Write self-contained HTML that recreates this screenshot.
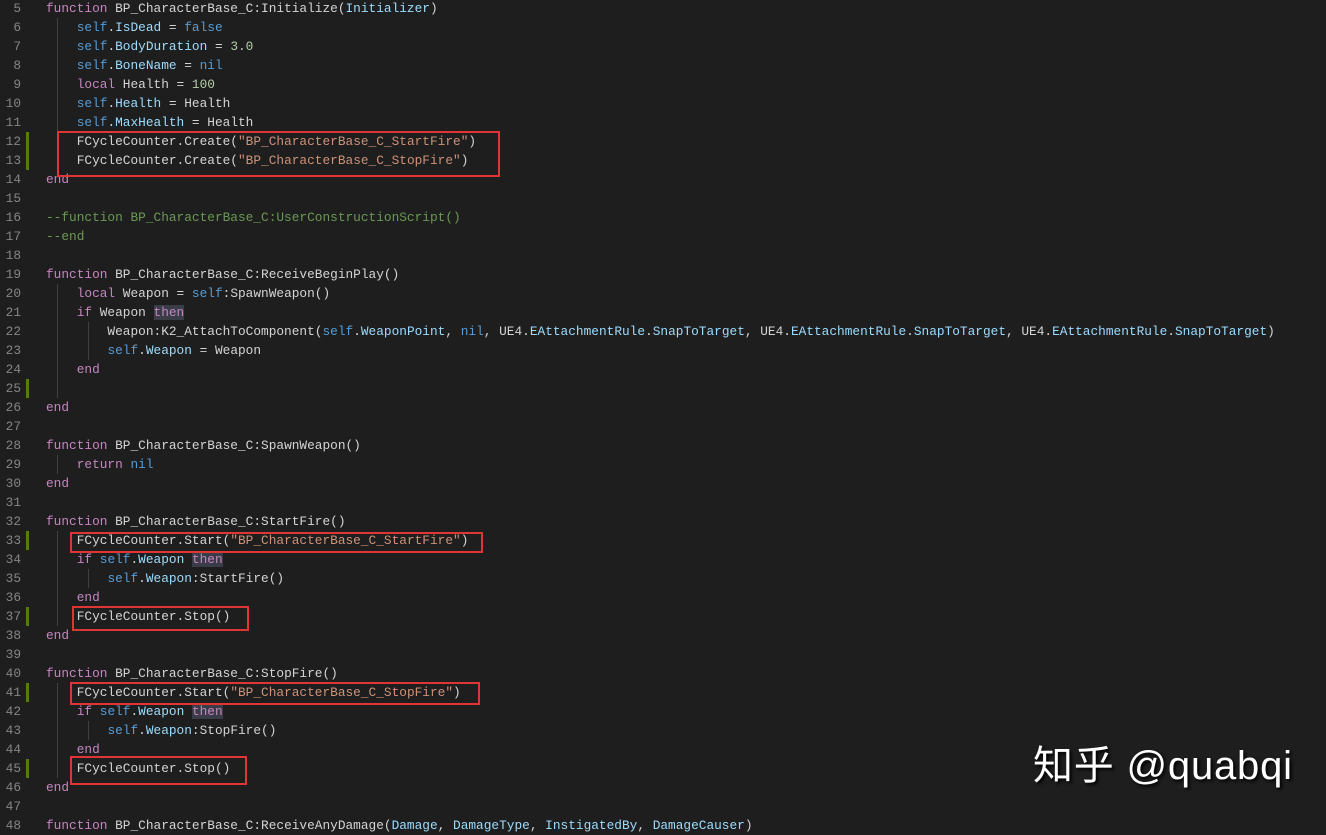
<!DOCTYPE html>
<html><head><meta charset="utf-8"><style>
body{margin:0;width:1326px;height:822px;background:#1e1e1e;overflow:hidden;position:relative;font-family:"Liberation Mono",monospace;font-size:12.8px;}
.l{position:absolute;left:0;height:19px;line-height:19px;white-space:pre;color:#d4d4d4;}
.n{position:absolute;left:0;width:21px;text-align:right;color:#858585;}
.c{position:absolute;left:46px;}
.k{color:#c586c0}.s{color:#569cd6}.p{color:#9cdcfe}.num{color:#b5cea8}.str{color:#ce9178}.cm{color:#6a9955}.f{color:#dcdcaa}
.th{background:#3a3d48;color:#c586c0}
.g{position:absolute;left:26px;width:3px;height:19px;background:#587c0c}
.ig{position:absolute;width:1px;background:#404040}
.box{position:absolute;border:2px solid #e03535;box-sizing:border-box}
.wm{position:absolute;left:1033px;top:733px;font-family:"Liberation Sans","Noto Sans CJK SC",sans-serif;font-size:40px;color:#fff;text-shadow:2px 2px 3px #000;white-space:nowrap;letter-spacing:0.8px}
</style></head><body>
<div class="ig" style="left:57px;top:18px;height:152px"></div>
<div class="ig" style="left:57px;top:284px;height:114px"></div>
<div class="ig" style="left:88px;top:322px;height:38px"></div>
<div class="ig" style="left:57px;top:455px;height:19px"></div>
<div class="ig" style="left:57px;top:531px;height:95px"></div>
<div class="ig" style="left:88px;top:569px;height:19px"></div>
<div class="ig" style="left:57px;top:683px;height:95px"></div>
<div class="ig" style="left:88px;top:721px;height:19px"></div>
<div class="g" style="top:132px;height:38px"></div>
<div class="g" style="top:379px"></div>
<div class="g" style="top:531px"></div>
<div class="g" style="top:607px"></div>
<div class="g" style="top:683px"></div>
<div class="g" style="top:759px"></div>

<div class="l" style="top:-1.5px"><span class="n">5</span><span class="c"><span class="k">function</span> BP_CharacterBase_C:Initialize(<span class="p">Initializer</span>)</span></div>
<div class="l" style="top:17.5px"><span class="n">6</span><span class="c">    <span class="s">self</span>.<span class="p">IsDead</span> = <span class="s">false</span></span></div>
<div class="l" style="top:36.5px"><span class="n">7</span><span class="c">    <span class="s">self</span>.<span class="p">BodyDuration</span> = <span class="num">3.0</span></span></div>
<div class="l" style="top:55.5px"><span class="n">8</span><span class="c">    <span class="s">self</span>.<span class="p">BoneName</span> = <span class="s">nil</span></span></div>
<div class="l" style="top:74.5px"><span class="n">9</span><span class="c">    <span class="k">local</span> Health = <span class="num">100</span></span></div>
<div class="l" style="top:93.5px"><span class="n">10</span><span class="c">    <span class="s">self</span>.<span class="p">Health</span> = Health</span></div>
<div class="l" style="top:112.5px"><span class="n">11</span><span class="c">    <span class="s">self</span>.<span class="p">MaxHealth</span> = Health</span></div>
<div class="l" style="top:131.5px"><span class="n">12</span><span class="c">    FCycleCounter.Create(<span class="str">"BP_CharacterBase_C_StartFire"</span>)</span></div>
<div class="l" style="top:150.5px"><span class="n">13</span><span class="c">    FCycleCounter.Create(<span class="str">"BP_CharacterBase_C_StopFire"</span>)</span></div>
<div class="l" style="top:169.5px"><span class="n">14</span><span class="c"><span class="k">end</span></span></div>
<div class="l" style="top:188.5px"><span class="n">15</span></div>
<div class="l" style="top:207.5px"><span class="n">16</span><span class="c cm">--function BP_CharacterBase_C:UserConstructionScript()</span></div>
<div class="l" style="top:226.5px"><span class="n">17</span><span class="c cm">--end</span></div>
<div class="l" style="top:245.5px"><span class="n">18</span></div>
<div class="l" style="top:264.5px"><span class="n">19</span><span class="c"><span class="k">function</span> BP_CharacterBase_C:ReceiveBeginPlay()</span></div>
<div class="l" style="top:283.5px"><span class="n">20</span><span class="c">    <span class="k">local</span> Weapon = <span class="s">self</span>:SpawnWeapon()</span></div>
<div class="l" style="top:302.5px"><span class="n">21</span><span class="c">    <span class="k">if</span> Weapon <span class="th">then</span></span></div>
<div class="l" style="top:321.5px"><span class="n">22</span><span class="c">        Weapon:K2_AttachToComponent(<span class="s">self</span>.<span class="p">WeaponPoint</span>, <span class="s">nil</span>, UE4.<span class="p">EAttachmentRule</span>.<span class="p">SnapToTarget</span>, UE4.<span class="p">EAttachmentRule</span>.<span class="p">SnapToTarget</span>, UE4.<span class="p">EAttachmentRule</span>.<span class="p">SnapToTarget</span>)</span></div>
<div class="l" style="top:340.5px"><span class="n">23</span><span class="c">        <span class="s">self</span>.<span class="p">Weapon</span> = Weapon</span></div>
<div class="l" style="top:359.5px"><span class="n">24</span><span class="c">    <span class="k">end</span></span></div>
<div class="l" style="top:378.5px"><span class="n">25</span></div>
<div class="l" style="top:397.5px"><span class="n">26</span><span class="c"><span class="k">end</span></span></div>
<div class="l" style="top:416.5px"><span class="n">27</span></div>
<div class="l" style="top:435.5px"><span class="n">28</span><span class="c"><span class="k">function</span> BP_CharacterBase_C:SpawnWeapon()</span></div>
<div class="l" style="top:454.5px"><span class="n">29</span><span class="c">    <span class="k">return</span> <span class="s">nil</span></span></div>
<div class="l" style="top:473.5px"><span class="n">30</span><span class="c"><span class="k">end</span></span></div>
<div class="l" style="top:492.5px"><span class="n">31</span></div>
<div class="l" style="top:511.5px"><span class="n">32</span><span class="c"><span class="k">function</span> BP_CharacterBase_C:StartFire()</span></div>
<div class="l" style="top:530.5px"><span class="n">33</span><span class="c">    FCycleCounter.Start(<span class="str">"BP_CharacterBase_C_StartFire"</span>)</span></div>
<div class="l" style="top:549.5px"><span class="n">34</span><span class="c">    <span class="k">if</span> <span class="s">self</span>.<span class="p">Weapon</span> <span class="th">then</span></span></div>
<div class="l" style="top:568.5px"><span class="n">35</span><span class="c">        <span class="s">self</span>.<span class="p">Weapon</span>:StartFire()</span></div>
<div class="l" style="top:587.5px"><span class="n">36</span><span class="c">    <span class="k">end</span></span></div>
<div class="l" style="top:606.5px"><span class="n">37</span><span class="c">    FCycleCounter.Stop()</span></div>
<div class="l" style="top:625.5px"><span class="n">38</span><span class="c"><span class="k">end</span></span></div>
<div class="l" style="top:644.5px"><span class="n">39</span></div>
<div class="l" style="top:663.5px"><span class="n">40</span><span class="c"><span class="k">function</span> BP_CharacterBase_C:StopFire()</span></div>
<div class="l" style="top:682.5px"><span class="n">41</span><span class="c">    FCycleCounter.Start(<span class="str">"BP_CharacterBase_C_StopFire"</span>)</span></div>
<div class="l" style="top:701.5px"><span class="n">42</span><span class="c">    <span class="k">if</span> <span class="s">self</span>.<span class="p">Weapon</span> <span class="th">then</span></span></div>
<div class="l" style="top:720.5px"><span class="n">43</span><span class="c">        <span class="s">self</span>.<span class="p">Weapon</span>:StopFire()</span></div>
<div class="l" style="top:739.5px"><span class="n">44</span><span class="c">    <span class="k">end</span></span></div>
<div class="l" style="top:758.5px"><span class="n">45</span><span class="c">    FCycleCounter.Stop()</span></div>
<div class="l" style="top:777.5px"><span class="n">46</span><span class="c"><span class="k">end</span></span></div>
<div class="l" style="top:796.5px"><span class="n">47</span></div>
<div class="l" style="top:815.5px"><span class="n">48</span><span class="c"><span class="k">function</span> BP_CharacterBase_C:ReceiveAnyDamage(<span class="p">Damage</span>, <span class="p">DamageType</span>, <span class="p">InstigatedBy</span>, <span class="p">DamageCauser</span>)</span></div>

<div class="box" style="left:57px;top:131px;width:443px;height:46px"></div>
<div class="box" style="left:70px;top:532px;width:413px;height:21px"></div>
<div class="box" style="left:72px;top:606px;width:177px;height:25px"></div>
<div class="box" style="left:70px;top:682px;width:410px;height:23px"></div>
<div class="box" style="left:70px;top:756px;width:177px;height:29px"></div>

<div class="wm">知乎 @quabqi</div>
</body></html>
